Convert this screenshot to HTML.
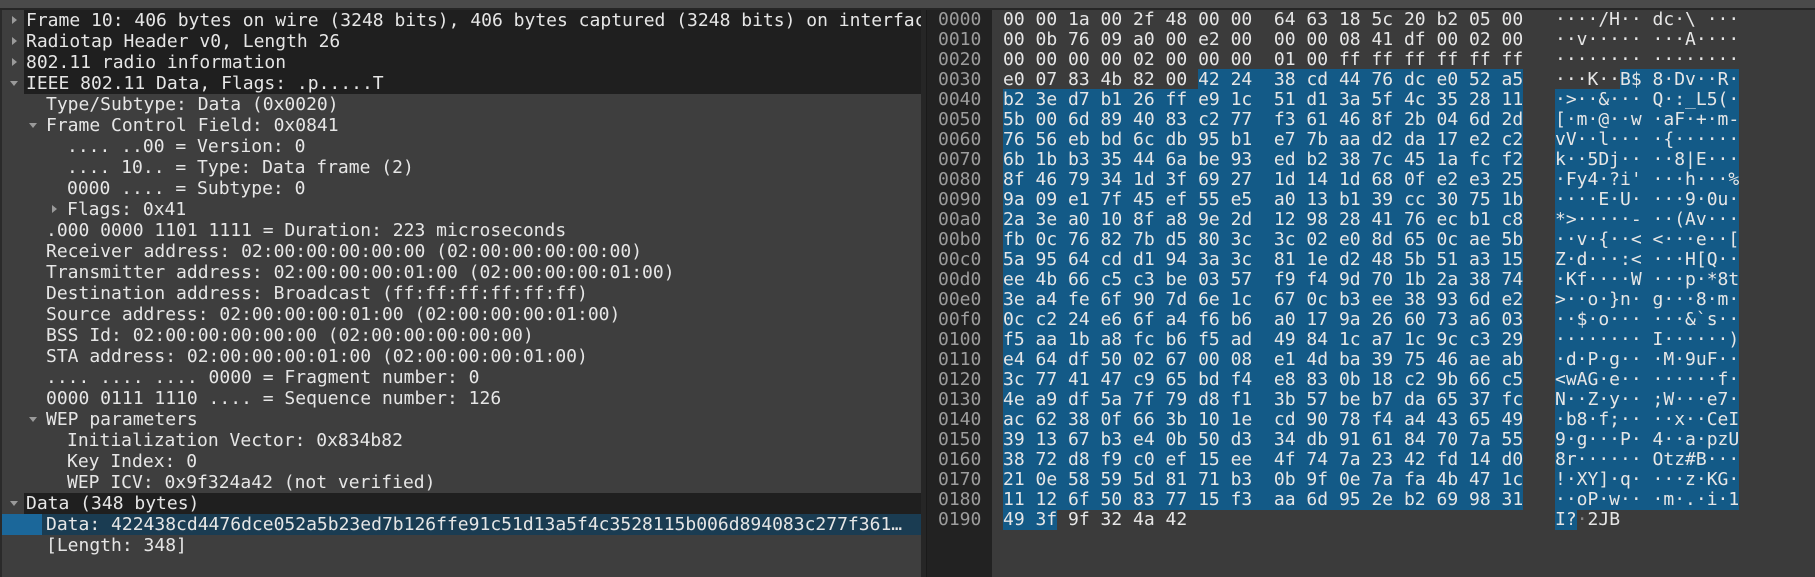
<!DOCTYPE html>
<html><head><meta charset="utf-8">
<style>
*{margin:0;padding:0;box-sizing:border-box}
html,body{width:1815px;height:577px;overflow:hidden;background:#3c3c3c;font-family:"DejaVu Sans Mono","Liberation Mono",monospace;font-size:18px;color:#e6e6e6}
#top{position:absolute;left:0;top:0;width:1815px;height:10px;background:#4a4a4a;border-bottom:2px solid #262626}
#left{position:absolute;left:0;top:10px;width:921px;height:567px;background:#3e3e3e;overflow:hidden;border-left:2px solid #2a2a2a}
.r{position:absolute;left:0;height:21px;width:921px;line-height:21px;white-space:pre}
.r.dk{background:#1f1f1f}
.r.dk.top{left:22px;width:899px}
.t{position:absolute;top:0}
.ar{position:absolute;top:7px;width:0;height:0}
.ar.c{border-left:5px solid #9a9a9a;border-top:4px solid transparent;border-bottom:4px solid transparent;top:6px}
.ar.o{border-top:5px solid #9a9a9a;border-left:4px solid transparent;border-right:4px solid transparent;top:8px}
#split{position:absolute;left:921px;top:10px;width:6px;height:567px;background:#262626;border-right:1px solid #1a1a1a}
#off{position:absolute;left:927px;top:10px;width:65px;height:567px;background:#222}
#hex{position:absolute;left:992px;top:10px;width:823px;height:567px;background:#3b3b3b}
.l{position:absolute;height:20px;line-height:20px;white-space:pre}
.o{color:#9d9d9d}
.h{background:#135a87}
</style></head><body>
<div id="top"></div>
<div id="left">
<div class="r dk top" style="top:0"></div><div class="r" style="top:0"><span class="ar c" style="left:10px"></span><span class="t" style="left:24px">Frame 10: 406 bytes on wire (3248 bits), 406 bytes captured (3248 bits) on interface 0</span></div>
<div class="r dk top" style="top:21px"></div><div class="r" style="top:21px"><span class="ar c" style="left:10px"></span><span class="t" style="left:24px">Radiotap Header v0, Length 26</span></div>
<div class="r dk top" style="top:42px"></div><div class="r" style="top:42px"><span class="ar c" style="left:10px"></span><span class="t" style="left:24px">802.11 radio information</span></div>
<div class="r dk top" style="top:63px"></div><div class="r" style="top:63px"><span class="ar o" style="left:8px"></span><span class="t" style="left:24px">IEEE 802.11 Data, Flags: .p.....T</span></div>
<div class="r" style="top:84px"><span class="t" style="left:44px">Type/Subtype: Data (0x0020)</span></div>
<div class="r" style="top:105px"><span class="ar o" style="left:27px"></span><span class="t" style="left:44px">Frame Control Field: 0x0841</span></div>
<div class="r" style="top:126px"><span class="t" style="left:65px">.... ..00 = Version: 0</span></div>
<div class="r" style="top:147px"><span class="t" style="left:65px">.... 10.. = Type: Data frame (2)</span></div>
<div class="r" style="top:168px"><span class="t" style="left:65px">0000 .... = Subtype: 0</span></div>
<div class="r" style="top:189px"><span class="ar c" style="left:50px"></span><span class="t" style="left:65px">Flags: 0x41</span></div>
<div class="r" style="top:210px"><span class="t" style="left:44px">.000 0000 1101 1111 = Duration: 223 microseconds</span></div>
<div class="r" style="top:231px"><span class="t" style="left:44px">Receiver address: 02:00:00:00:00:00 (02:00:00:00:00:00)</span></div>
<div class="r" style="top:252px"><span class="t" style="left:44px">Transmitter address: 02:00:00:00:01:00 (02:00:00:00:01:00)</span></div>
<div class="r" style="top:273px"><span class="t" style="left:44px">Destination address: Broadcast (ff:ff:ff:ff:ff:ff)</span></div>
<div class="r" style="top:294px"><span class="t" style="left:44px">Source address: 02:00:00:00:01:00 (02:00:00:00:01:00)</span></div>
<div class="r" style="top:315px"><span class="t" style="left:44px">BSS Id: 02:00:00:00:00:00 (02:00:00:00:00:00)</span></div>
<div class="r" style="top:336px"><span class="t" style="left:44px">STA address: 02:00:00:00:01:00 (02:00:00:00:01:00)</span></div>
<div class="r" style="top:357px"><span class="t" style="left:44px">.... .... .... 0000 = Fragment number: 0</span></div>
<div class="r" style="top:378px"><span class="t" style="left:44px">0000 0111 1110 .... = Sequence number: 126</span></div>
<div class="r" style="top:399px"><span class="ar o" style="left:27px"></span><span class="t" style="left:44px">WEP parameters</span></div>
<div class="r" style="top:420px"><span class="t" style="left:65px">Initialization Vector: 0x834b82</span></div>
<div class="r" style="top:441px"><span class="t" style="left:65px">Key Index: 0</span></div>
<div class="r" style="top:462px"><span class="t" style="left:65px">WEP ICV: 0x9f324a42 (not verified)</span></div>
<div class="r dk top" style="top:483px"></div><div class="r" style="top:483px"><span class="ar o" style="left:8px"></span><span class="t" style="left:24px">Data (348 bytes)</span></div>
<div class="r" style="top:504px;background:#1a3c52"><span style="position:absolute;left:0;top:0;width:40px;height:21px;background:#1b679a"></span><span class="t" style="left:44px">Data: 422438cd4476dce052a5b23ed7b126ffe91c51d13a5f4c3528115b006d894083c277f361…</span></div>
<div class="r" style="top:525px"><span class="t" style="left:44px">[Length: 348]</span></div>
</div>
<div id="split"></div>
<div id="off">
<div class="l o" style="left:11px;top:0">0000
0010
0020
0030
0040
0050
0060
0070
0080
0090
00a0
00b0
00c0
00d0
00e0
00f0
0100
0110
0120
0130
0140
0150
0160
0170
0180
0190</div>
</div>
<div id="hex"></div>
<div class="l" style="left:1003px;top:10px">00 00 1a 00 2f 48 00 00  64 63 18 5c 20 b2 05 00</div>
<div class="l" style="left:1003px;top:30px">00 0b 76 09 a0 00 e2 00  00 00 08 41 df 00 02 00</div>
<div class="l" style="left:1003px;top:50px">00 00 00 00 02 00 00 00  01 00 ff ff ff ff ff ff</div>
<div class="l" style="left:1003px;top:70px">e0 07 83 4b 82 00 <span class="h">42 24  38 cd 44 76 dc e0 52 a5</span></div>
<div class="l" style="left:1003px;top:90px"><span class="h">b2 3e d7 b1 26 ff e9 1c  51 d1 3a 5f 4c 35 28 11
5b 00 6d 89 40 83 c2 77  f3 61 46 8f 2b 04 6d 2d
76 56 eb bd 6c db 95 b1  e7 7b aa d2 da 17 e2 c2
6b 1b b3 35 44 6a be 93  ed b2 38 7c 45 1a fc f2
8f 46 79 34 1d 3f 69 27  1d 14 1d 68 0f e2 e3 25
9a 09 e1 7f 45 ef 55 e5  a0 13 b1 39 cc 30 75 1b
2a 3e a0 10 8f a8 9e 2d  12 98 28 41 76 ec b1 c8
fb 0c 76 82 7b d5 80 3c  3c 02 e0 8d 65 0c ae 5b
5a 95 64 cd d1 94 3a 3c  81 1e d2 48 5b 51 a3 15
ee 4b 66 c5 c3 be 03 57  f9 f4 9d 70 1b 2a 38 74
3e a4 fe 6f 90 7d 6e 1c  67 0c b3 ee 38 93 6d e2
0c c2 24 e6 6f a4 f6 b6  a0 17 9a 26 60 73 a6 03
f5 aa 1b a8 fc b6 f5 ad  49 84 1c a7 1c 9c c3 29
e4 64 df 50 02 67 00 08  e1 4d ba 39 75 46 ae ab
3c 77 41 47 c9 65 bd f4  e8 83 0b 18 c2 9b 66 c5
4e a9 df 5a 7f 79 d8 f1  3b 57 be b7 da 65 37 fc
ac 62 38 0f 66 3b 10 1e  cd 90 78 f4 a4 43 65 49
39 13 67 b3 e4 0b 50 d3  34 db 91 61 84 70 7a 55
38 72 d8 f9 c0 ef 15 ee  4f 74 7a 23 42 fd 14 d0
21 0e 58 59 5d 81 71 b3  0b 9f 0e 7a fa 4b 47 1c
11 12 6f 50 83 77 15 f3  aa 6d 95 2e b2 69 98 31</span></div>
<div class="l" style="left:1003px;top:510px"><span class="h">49 3f</span> 9f 32 4a 42</div>
<div class="l" style="left:1555px;top:10px">····/H·· dc·\ ···
··v····· ···A····
········ ········</div>
<div class="l" style="left:1555px;top:70px">···K··<span class="h">B$ 8·Dv··R·</span></div>
<div class="l" style="left:1555px;top:90px"><span class="h">·&gt;··&amp;··· Q·:_L5(·
[·m·@··w ·aF·+·m-
vV··l··· ·{······
k··5Dj·· ··8|E···
·Fy4·?i' ···h···%
····E·U· ···9·0u·
*&gt;·····- ··(Av···
··v·{··&lt; &lt;···e··[
Z·d···:&lt; ···H[Q··
·Kf····W ···p·*8t
&gt;··o·}n· g···8·m·
··$·o··· ···&amp;`s··
········ I······)
·d·P·g·· ·M·9uF··
&lt;wAG·e·· ······f·
N··Z·y·· ;W···e7·
·b8·f;·· ··x··CeI
9·g···P· 4··a·pzU
8r······ Otz#B···
!·XY]·q· ···z·KG·
··oP·w·· ·m·.·i·1</span></div>
<div class="l" style="left:1555px;top:510px"><span class="h">I?</span><span style="color:#888">·</span>2JB</div>
</body></html>
